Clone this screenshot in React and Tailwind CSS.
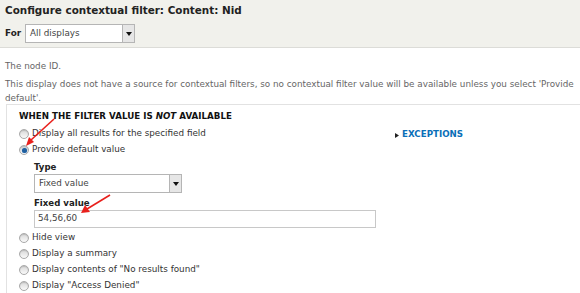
import React from "react";

const font = { fontFamily: '"DejaVu Sans", Verdana, sans-serif' };

function Radio({ checked, label }) {
    return (
        <div className="flex items-center h-4 gap-[3px]">
            <span className="w-[10px] h-[10px] rounded-full border border-[#a9a9a9] bg-gradient-to-b from-[#d8d8d8] to-[#fafafa] flex items-center justify-center shadow-[inset_0_1px_1px_rgba(0,0,0,0.15)]">
                {checked && <span className="w-[5px] h-[5px] rounded-full bg-[#1f5f9f] shadow-[0_0_1px_#6aa6e0]" />}
            </span>
            <span className="text-[8.8px] text-[#333]">{label}</span>
        </div>
    );
}

function SelectBox({ value, width }) {
    return (
        <div className={`flex items-stretch h-[19px] border border-[#b5b5b5] bg-white ${width}`}>
            <span className="flex-1 flex items-center pl-1 text-[8.8px] text-[#444]">{value}</span>
            <span className="w-3 border-l border-[#b5b5b5] bg-[#e6e6e6] flex items-center justify-center">
                <svg width="6" height="4" viewBox="0 0 6 4"><path d="M0 0H6L3 4Z" fill="#111" /></svg>
            </span>
        </div>
    );
}

export default function App() {
    return (
        <div className="relative w-[580px] h-[293px] overflow-hidden bg-white" style={font}>
            <div className="bg-[#f1f1ec] border-b border-[#dcdcd8] h-[48px] px-[5px] pt-[3px]">
                <h1 className="text-[10.4px] font-bold text-[#222] leading-[14px]">Configure contextual filter: Content: Nid</h1>
                <div className="flex items-center gap-[4px] mt-[7px]">
                    <span className="text-[8.8px] font-bold text-[#222]">For</span>
                    <SelectBox value="All displays" width="w-[110px]" />
                </div>
            </div>

            <div className="px-[5px] pt-[11px] text-[8.8px] text-[#666] leading-[15px]">
                <p>The node ID.</p>
                <p className="mt-[3px] whitespace-nowrap leading-[14px]">
                    This display does not have a source for contextual filters, so no contextual filter value will be available unless you select 'Provide<br />default'.
                </p>
            </div>

            <div className="ml-[6px] -mt-px border-l border-t border-[#e2e2e2] pl-[12px] pt-[4px]">
                <div className="flex">
                    <div className="w-[376px]">
                        <div className="text-[8.7px] font-bold text-[#111] leading-[14px]">
                            WHEN THE FILTER VALUE IS <em>NOT</em> AVAILABLE
                        </div>
                        <div className="mt-[3px]">
                            <Radio label="Display all results for the specified field" />
                            <Radio checked label="Provide default value" />
                        </div>
                        <div className="pl-[15px] mt-[2px]">
                            <div className="text-[8.6px] font-bold text-[#222] leading-[14px]">Type</div>
                            <SelectBox value="Fixed value" width="w-[148px]" />
                            <div className="text-[8.6px] font-bold text-[#222] leading-[14px] mt-[3px]">Fixed value</div>
                            <div className="w-[342px] h-[18px] border border-[#c8c8c8] bg-white flex items-center pl-[3px] text-[8.8px] text-[#444]">
                                54,56,60
                            </div>
                        </div>
                        <div className="mt-[2px]">
                            <Radio label="Hide view" />
                            <Radio label="Display a summary" />
                            <Radio label={'Display contents of "No results found"'} />
                            <Radio label={'Display "Access Denied"'} />
                        </div>
                    </div>
                    <div className="pt-[18px] flex items-center gap-[3px] h-fit">
                        <div className="flex items-center gap-[3px] h-4">
                            <svg width="4" height="5" viewBox="0 0 4 5"><path d="M0 0L4 2.5L0 5Z" fill="#222" /></svg>
                            <span className="text-[8.7px] font-bold text-[#0a6fb8]">EXCEPTIONS</span>
                        </div>
                    </div>
                </div>
            </div>

            <svg className="absolute left-0 top-0 pointer-events-none" width="580" height="293">
                <line x1="54" y1="119" x2="31" y2="140" stroke="#e8201c" strokeWidth="1.6" />
                <path d="M26 146L29 137L34 142Z" fill="#e8201c" />
                <line x1="110" y1="195" x2="87" y2="209" stroke="#e8201c" strokeWidth="1.6" />
                <path d="M81 213L85 205L90 212Z" fill="#e8201c" />
            </svg>
        </div>
    );
}
